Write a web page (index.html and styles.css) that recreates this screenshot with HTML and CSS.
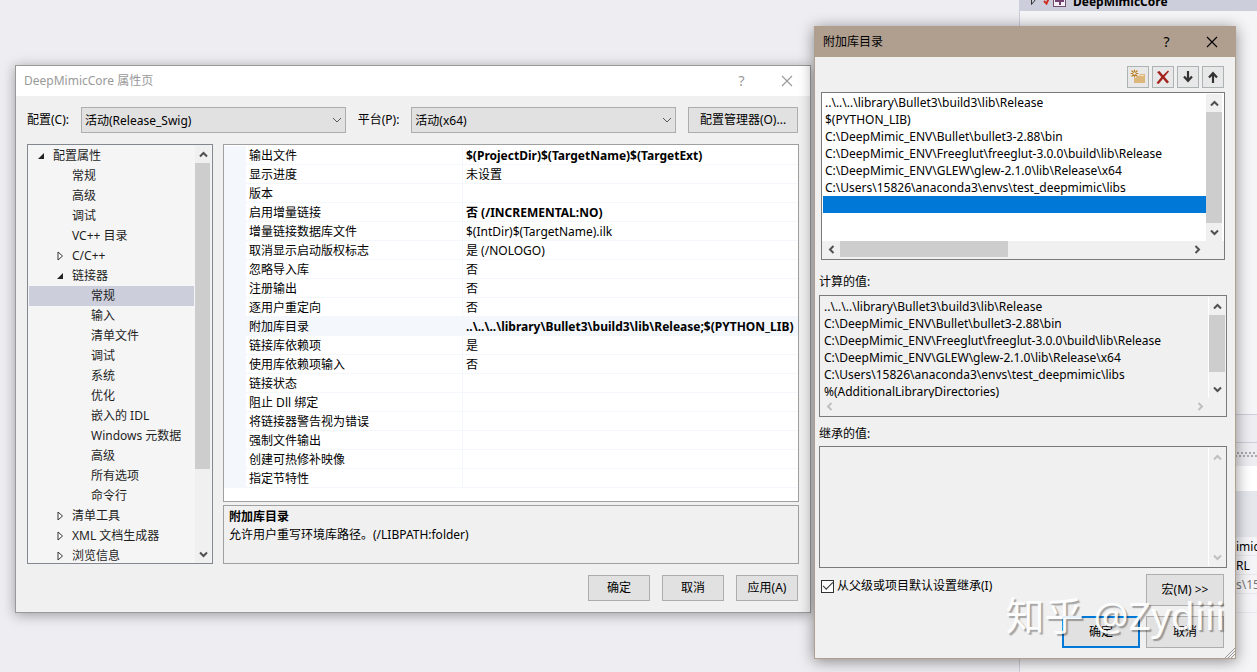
FILE: index.html
```html
<!DOCTYPE html>
<html lang="zh-CN">
<head>
<meta charset="utf-8">
<title>DeepMimicCore 属性页</title>
<link rel="stylesheet" href="styles.css">
</head>
<body>
<svg class="defs" aria-hidden="true">
  <symbol id="up" viewBox="0 0 9 9"><path d="M1 6.5 4.5 3 8 6.5" fill="none" stroke="currentColor" stroke-width="2"/></symbol>
  <symbol id="down" viewBox="0 0 9 9"><path d="M1 2.5 4.5 6 8 2.5" fill="none" stroke="currentColor" stroke-width="2"/></symbol>
  <symbol id="left" viewBox="0 0 9 9"><path d="M6.5 1 3 4.500 6.500 8" fill="none" stroke="currentColor" stroke-width="2"/></symbol>
  <symbol id="right" viewBox="0 0 9 9"><path d="M2.500 1 6 4.500 2.500 8" fill="none" stroke="currentColor" stroke-width="2"/></symbol>
  <symbol id="close" viewBox="0 0 12 12"><path d="M1 1 11 11M11 1 1 11" fill="none" stroke="currentColor" stroke-width="1.100"/></symbol>
  <symbol id="open" viewBox="0 0 8 8"><path d="M7 1V7H1Z" fill="#222"/></symbol>
  <symbol id="shut" viewBox="0 0 8 10"><path d="M2 1 6.500 5 2 9Z" fill="#fff" stroke="#333"/></symbol>
</svg>

<aside class="explorer">
  <div class="explorer-head">
    <svg width="40" height="10" viewBox="0 0 40 10"><path d="M2.500-2V4.500L7-1" fill="none" stroke="#333"/><path d="M15 1 17.500 3.500 20-2" fill="none" stroke="#d02f22" stroke-width="2"/><rect x="24.500" y="-5" width="12" height="11.500" fill="#f5f0f5" stroke="#70506f"/><path d="M26 1H35M31-2V5" stroke="#70406f" stroke-width="2"/></svg>
    <b>DeepMimicCore</b>
  </div>
  <div class="explorer-body"></div>
  <div class="explorer-gap"></div>
  <div class="explorer-dots"></div>
  <div class="explorer-field"></div>
  <div class="explorer-tools"></div>
  <div class="explorer-row">imic</div>
  <div class="explorer-row">RL</div>
  <div class="explorer-row dim">s\15</div>
  <div class="explorer-row"></div>
  <div class="explorer-rest"></div>
</aside>

<section class="window props" aria-label="DeepMimicCore 属性页">
  <header class="titlebar">
    <h1>DeepMimicCore 属性页</h1>
    <button class="caption" type="button" aria-label="帮助">?</button>
    <button class="caption" type="button" aria-label="关闭"><svg width="12" height="12"><use href="#close"/></svg></button>
  </header>
  <div class="config">
    <label for="cfg">配置(C):</label>
    <div class="combo"><select id="cfg"><option>活动(Release_Swig)</option></select><svg viewBox="0 0 10 6"><path d="M1 1 5 5 9 1" fill="none" stroke="#555"/></svg></div>
    <label for="plat">平台(P):</label>
    <div class="combo"><select id="plat"><option>活动(x64)</option></select><svg viewBox="0 0 10 6"><path d="M1 1 5 5 9 1" fill="none" stroke="#555"/></svg></div>
    <button class="btn manager" type="button">配置管理器(O)...</button>
  </div>
  <div class="main">
    <div class="tree">
      <ul>
        <li><svg><use href="#open"/></svg>配置属性</li>
        <li class="l1">常规</li>
        <li class="l1">高级</li>
        <li class="l1">调试</li>
        <li class="l1">VC++ 目录</li>
        <li class="l1"><svg><use href="#shut"/></svg>C/C++</li>
        <li class="l1"><svg><use href="#open"/></svg>链接器</li>
        <li class="l2 sel">常规</li>
        <li class="l2">输入</li>
        <li class="l2">清单文件</li>
        <li class="l2">调试</li>
        <li class="l2">系统</li>
        <li class="l2">优化</li>
        <li class="l2">嵌入的 IDL</li>
        <li class="l2">Windows 元数据</li>
        <li class="l2">高级</li>
        <li class="l2">所有选项</li>
        <li class="l2">命令行</li>
        <li class="l1"><svg><use href="#shut"/></svg>清单工具</li>
        <li class="l1"><svg><use href="#shut"/></svg>XML 文档生成器</li>
        <li class="l1"><svg><use href="#shut"/></svg>浏览信息</li>
      </ul>
      <div class="vbar"><svg><use href="#up"/></svg><div class="track"><i class="thumb tree-thumb"></i></div><svg><use href="#down"/></svg></div>
    </div>
    <div class="details">
      <div class="grid">
        <table>
          <colgroup><col class="gutter"><col class="name"><col></colgroup>
          <tr><td></td><th scope="row">输出文件</th><td><b>$(ProjectDir)$(TargetName)$(TargetExt)</b></td></tr>
          <tr><td></td><th scope="row">显示进度</th><td>未设置</td></tr>
          <tr><td></td><th scope="row">版本</th><td></td></tr>
          <tr><td></td><th scope="row">启用增量链接</th><td><b>否 (/INCREMENTAL:NO)</b></td></tr>
          <tr><td></td><th scope="row">增量链接数据库文件</th><td>$(IntDir)$(TargetName).ilk</td></tr>
          <tr><td></td><th scope="row">取消显示启动版权标志</th><td>是 (/NOLOGO)</td></tr>
          <tr><td></td><th scope="row">忽略导入库</th><td>否</td></tr>
          <tr><td></td><th scope="row">注册输出</th><td>否</td></tr>
          <tr><td></td><th scope="row">逐用户重定向</th><td>否</td></tr>
          <tr class="current"><td></td><th scope="row">附加库目录</th><td><b>..\..\..\library\Bullet3\build3\lib\Release;$(PYTHON_LIB)</b></td></tr>
          <tr><td></td><th scope="row">链接库依赖项</th><td>是</td></tr>
          <tr><td></td><th scope="row">使用库依赖项输入</th><td>否</td></tr>
          <tr><td></td><th scope="row">链接状态</th><td></td></tr>
          <tr><td></td><th scope="row">阻止 Dll 绑定</th><td></td></tr>
          <tr><td></td><th scope="row">将链接器警告视为错误</th><td></td></tr>
          <tr><td></td><th scope="row">强制文件输出</th><td></td></tr>
          <tr><td></td><th scope="row">创建可热修补映像</th><td></td></tr>
          <tr><td></td><th scope="row">指定节特性</th><td></td></tr>
        </table>
      </div>
      <div class="about"><b>附加库目录</b><p>允许用户重写环境库路径。(/LIBPATH:folder)</p></div>
    </div>
  </div>
  <footer class="actions">
    <button class="btn" type="button">确定</button>
    <button class="btn" type="button">取消</button>
    <button class="btn" type="button">应用(A)</button>
  </footer>
</section>

<section class="window dirs" aria-label="附加库目录">
  <header class="titlebar">
    <h1>附加库目录</h1>
    <button class="caption" type="button" aria-label="帮助">?</button>
    <button class="caption" type="button" aria-label="关闭"><svg width="12" height="12"><use href="#close"/></svg></button>
  </header>
  <div class="tools">
    <button type="button" aria-label="新行"><svg viewBox="0 0 16 16"><path d="M4 7H9L10 5H15V14H4Z" fill="#dcb67a"/><path d="M10 6.500H14" stroke="#f3e3c4"/><path d="M4.500 0V9M0 4.500H9M1.500 1.500 7.500 7.500M7.500 1.500 1.500 7.500" stroke="#efefef" stroke-width="2.500"/><path d="M4.500 .5V8.500M.5 4.500H8.500M1.500 1.500 7.500 7.500M7.500 1.500 1.500 7.500" stroke="#b87d25" stroke-width="1.200"/><circle cx="4.500" cy="4.500" r="1.200" fill="#efefef"/></svg></button>
    <button type="button" aria-label="删除"><svg viewBox="0 0 16 16"><path d="M2 3 4.500 2 8 6.200 13 1.500 14 2.500 9.500 7.800 14 13 12 14.500 8 9.800 3.500 15 1.500 14 6.300 8Z" fill="#a3221b"/></svg></button>
    <button type="button" aria-label="下移"><svg viewBox="0 0 16 16"><path d="M8 2V12M4 7.500 8 11.800 12 7.500" fill="none" stroke="#333" stroke-width="2.200"/></svg></button>
    <button type="button" aria-label="上移"><svg viewBox="0 0 16 16"><path d="M8 14V4M4 8.500 8 4.200 12 8.500" fill="none" stroke="#333" stroke-width="2.200"/></svg></button>
  </div>
  <div class="pane list">
    <ul role="listbox" aria-label="附加库目录">
      <li role="option">..\..\..\library\Bullet3\build3\lib\Release</li>
      <li role="option">$(PYTHON_LIB)</li>
      <li role="option">C:\DeepMimic_ENV\Bullet\bullet3-2.88\bin</li>
      <li role="option">C:\DeepMimic_ENV\Freeglut\freeglut-3.0.0\build\lib\Release</li>
      <li role="option">C:\DeepMimic_ENV\GLEW\glew-2.1.0\lib\Release\x64</li>
      <li role="option">C:\Users\15826\anaconda3\envs\test_deepmimic\libs</li>
      <li role="option" class="picked" aria-selected="true"></li>
    </ul>
    <div class="vbar"><svg><use href="#up"/></svg><div class="track"><i class="thumb full"></i></div><svg><use href="#down"/></svg></div>
    <div class="hbar"><svg><use href="#left"/></svg><div class="track"><i class="thumb wide"></i></div><svg><use href="#right"/></svg></div>
  </div>
  <label class="caption-text" for="evaluated">计算的值:</label>
  <div class="pane value">
    <textarea id="evaluated" readonly wrap="off">..\..\..\library\Bullet3\build3\lib\Release
C:\DeepMimic_ENV\Bullet\bullet3-2.88\bin
C:\DeepMimic_ENV\Freeglut\freeglut-3.0.0\build\lib\Release
C:\DeepMimic_ENV\GLEW\glew-2.1.0\lib\Release\x64
C:\Users\15826\anaconda3\envs\test_deepmimic\libs
%(AdditionalLibraryDirectories)</textarea>
    <div class="vbar"><svg><use href="#up"/></svg><div class="track"><i class="thumb most"></i></div><svg><use href="#down"/></svg></div>
    <div class="hbar off"><svg><use href="#left"/></svg><div class="track"></div><svg><use href="#right"/></svg></div>
  </div>
  <label class="caption-text" for="inherited">继承的值:</label>
  <div class="pane value tall">
    <textarea id="inherited" readonly></textarea>
    <div class="vbar off"><svg><use href="#up"/></svg><div class="track"></div><svg><use href="#down"/></svg></div>
  </div>
  <div class="inherit">
    <label><input type="checkbox" checked>从父级或项目默认设置继承(I)</label>
    <button class="btn" type="button">宏(M) &gt;&gt;</button>
  </div>
  <footer class="actions">
    <button class="btn primary" type="button">确定</button>
    <button class="btn" type="button">取消</button>
  </footer>
  <svg class="grip" viewBox="0 0 10 10"><path d="M0 10 10 0M3 10 10 3M6 10 10 6" stroke="#999"/></svg>
  <div class="watermark">知乎 @Zydiii</div>
</section>
</body>
</html>
```
FILE: styles.css
```css
* { box-sizing: border-box; }
html, body { height: 100%; }
body {
  margin: 0;
  position: relative;
  overflow: hidden;
  background: #eeeef2;
  color: #000;
  font: 12px/20px "Noto Sans", "Noto Sans CJK SC", sans-serif;
}
button, select, textarea, input { font: inherit; color: inherit; margin: 0; }
ul, p, h1 { margin: 0; padding: 0; list-style: none; }
.defs { position: absolute; width: 0; height: 0; }

/* Solution explorer behind the dialogs */
.explorer {
  position: absolute;
  top: 0;
  right: 0;
  bottom: 0;
  width: 238px;
  display: flex;
  flex-direction: column;
  overflow: hidden;
  background: #f5f5f7;
  border-left: 1px solid #cccedb;
  white-space: nowrap;
}
.explorer-head {
  display: flex;
  align-items: flex-start;
  gap: 4px;
  height: 11px;
  padding-left: 9px;
  background: #cccedb;
  line-height: 4px;
}
.explorer-body { height: 403px; }
.explorer-gap { height: 29px; background: #eeeef2; border: solid #cccedb; border-width: 1px 0; }
.explorer-dots {
  height: 23px;
  background:
    radial-gradient(circle, #aaa 1px, transparent 1px) 0 8px / 4px 4px repeat-x,
    radial-gradient(circle, #aaa 1px, transparent 1px) 2px 11px / 4px 4px repeat-x,
    #eeeef2;
}
.explorer-field { height: 25px; background: #fff; }
.explorer-tools { height: 46px; background: #e6e7ed; }
.explorer-row { height: 19px; padding-left: 216px; line-height: 20px; border-bottom: 1px solid #e8e8ec; }
.dim { color: #777; }
.explorer-rest { flex: 1; }

/* Dialog frame */
.window { position: absolute; background: #f0f0f0; }
.titlebar { display: flex; align-items: center; height: 31px; padding-left: 8px; }
.titlebar h1 { flex: 1; font-size: 12px; font-weight: 400; }
.caption {
  display: grid;
  place-items: center;
  width: 45px;
  height: 30px;
  padding: 0;
  border: 0;
  background: none;
  font-size: 14px;
}
.btn {
  height: 26px;
  min-width: 62px;
  padding: 0;
  border: 1px solid #adadad;
  background: #e1e1e1;
}

/* Property pages */
.props {
  top: 65px;
  left: 15px;
  right: 446px;
  border: 1px solid #999;
  box-shadow: 0 2px 12px rgba(0, 0, 0, .35);
}
.props .titlebar { height: 30px; padding-right: 1px; background: #fff; color: #999; }
.config { display: flex; align-items: center; gap: 12px; padding: 11px 12px 0 11px; }
.combo { position: relative; flex: 1; }
.combo select {
  display: block;
  width: 100%;
  height: 26px;
  padding: 1px 3px 0;
  border: 1px solid #adadad;
  border-radius: 0;
  background: #e1e1e1;
  appearance: none;
}
.combo svg { position: absolute; right: 4px; top: 10px; width: 10px; height: 6px; }
.manager { width: 110px; }
.main { display: flex; gap: 10px; padding: 11px 11px 0; }
.tree {
  display: flex;
  flex: 0 0 186px;
  height: 420px;
  padding-right: 1px;
  overflow: hidden;
  border: 1px solid #828790;
  background: #f5f5f5;
}
.tree ul { flex: 1; padding: 1px 1px 0; white-space: nowrap; }
.tree li { display: flex; align-items: center; height: 20px; padding-left: 24px; color: #1e1e1e; }
.tree li svg { flex: none; width: 8px; height: 10px; margin: 0 8px 0 -16px; }
.tree .l1 { padding-left: 43px; }
.tree .l2 { padding-left: 62px; }
.tree .sel { background: #cccedb; }
.details { flex: 1; min-width: 0; display: flex; flex-direction: column; gap: 3px; }
.grid { padding-bottom: 13px; border: 1px solid #a0a0a0; background: #fff; }
.grid table { width: 100%; table-layout: fixed; border-collapse: separate; border-spacing: 0; margin-top: 1px; }
.gutter { width: 22px; }
.name { width: 217px; }
.grid td, .grid th {
  height: 19px;
  padding: 1px 0 0 3px;
  overflow: hidden;
  border-bottom: 1px solid #f4f7fc;
  font-weight: 400;
  line-height: 17px;
  text-align: left;
  white-space: nowrap;
}
.grid th { border-right: 1px solid #f4f7fc; }
.grid td:first-child, .grid .current th, .grid .current td { background: #f4f7fc; }
.about { height: 59px; padding: 2px 5px; border: 1px solid #a0a0a0; line-height: 18px; }
.actions { display: flex; justify-content: flex-end; gap: 12px; padding: 11px 12px; }

/* Scroll bars */
.vbar, .hbar { display: flex; align-items: center; color: #505050; background: #f0f0f0; }
.vbar { flex-direction: column; width: 16px; }
.hbar { height: 16px; }
.vbar svg, .hbar svg { flex: none; width: 9px; height: 9px; margin: 5px 4px 4px; }
.track { flex: 1; align-self: stretch; }
.thumb { display: block; width: 100%; height: 100%; background: #cdcdcd; }
.tree-thumb { width: 15px; height: 80%; }
.wide { width: 48%; }
.most { height: 88%; }
.off { color: #bfbfbf; }

/* Additional library directories */
.dirs {
  top: 26px;
  right: 21px;
  width: 422px;
  padding: 0 9px 10px 5px;
  border: 1px solid #b09e8f;
  border-top: 0;
  box-shadow: 0 2px 14px rgba(0, 0, 0, .45);
}
.dirs .titlebar { margin: 0 -9px 0 -5px; padding-right: 1px; background: #b09e8f; }
.tools { display: flex; justify-content: flex-end; gap: 3px; padding: 9px 2px 4px 0; }
.tools button { width: 22px; height: 22px; padding: 2px; border: 1px solid #adb2b5; background: #e8e8e8; }
.tools svg { display: block; width: 16px; height: 16px; }
.pane { display: grid; grid-template-columns: 1fr 16px; border: 1px solid #7a7a7a; padding: 1px; }
.list {
  margin: 0 1px;
  padding-right: 2px;
  grid-template-rows: 147px 17px;
  background: linear-gradient(#fff, #fff) top / 100% 148px no-repeat #f0f0f0;
}
.list ul { background: #fff; }
.list li { height: 17px; padding-left: 2px; line-height: 17px; white-space: nowrap; }
.list .picked { background: #0078d7; }
.caption-text { display: block; height: 35px; padding-top: 12px; margin-left: -1px; }
.value { grid-template-rows: 101px 17px; margin: 0 -1px; }
.value + .caption-text { height: 29px; padding-top: 7px; }
.tall { grid-template-rows: 118px; }
.value textarea {
  width: 100%;
  height: 100%;
  padding: 1px 3px;
  border: 0;
  border-right: 1px solid #fff;
  outline: 0;
  overflow: hidden;
  resize: none;
  background: none;
  line-height: 17px;
}
.inherit { display: flex; justify-content: space-between; align-items: flex-start; padding: 6px 2px 0 1px; }
.inherit label { display: flex; align-items: center; gap: 3px; padding-top: 2px; }
.inherit input {
  appearance: none;
  width: 13px;
  height: 13px;
  border: 1px solid #333;
  background: #fff;
  display: grid;
  place-items: center;
}
.inherit input:checked::before {
  content: "";
  width: 9px;
  height: 4px;
  border: solid #333;
  border-width: 0 0 1px 1px;
  transform: rotate(-45deg);
  margin-bottom: 3px;
}
.dirs .btn { width: 78px; height: 32px; }
.dirs .actions { gap: 6px; padding: 10px 2px 0; }
.dirs .primary { border: 2px solid #0078d7; }
.grip { position: absolute; right: 0; bottom: 0; width: 10px; height: 10px; }
.watermark {
  position: absolute;
  right: 10px;
  bottom: 18px;
  color: #fff;
  font: 39px/50px "Noto Sans", "Noto Sans CJK SC", sans-serif;
  text-shadow: 2px 2px 1px rgba(0, 0, 0, .35);
  opacity: .9;
  pointer-events: none;
  white-space: nowrap;
}
```
